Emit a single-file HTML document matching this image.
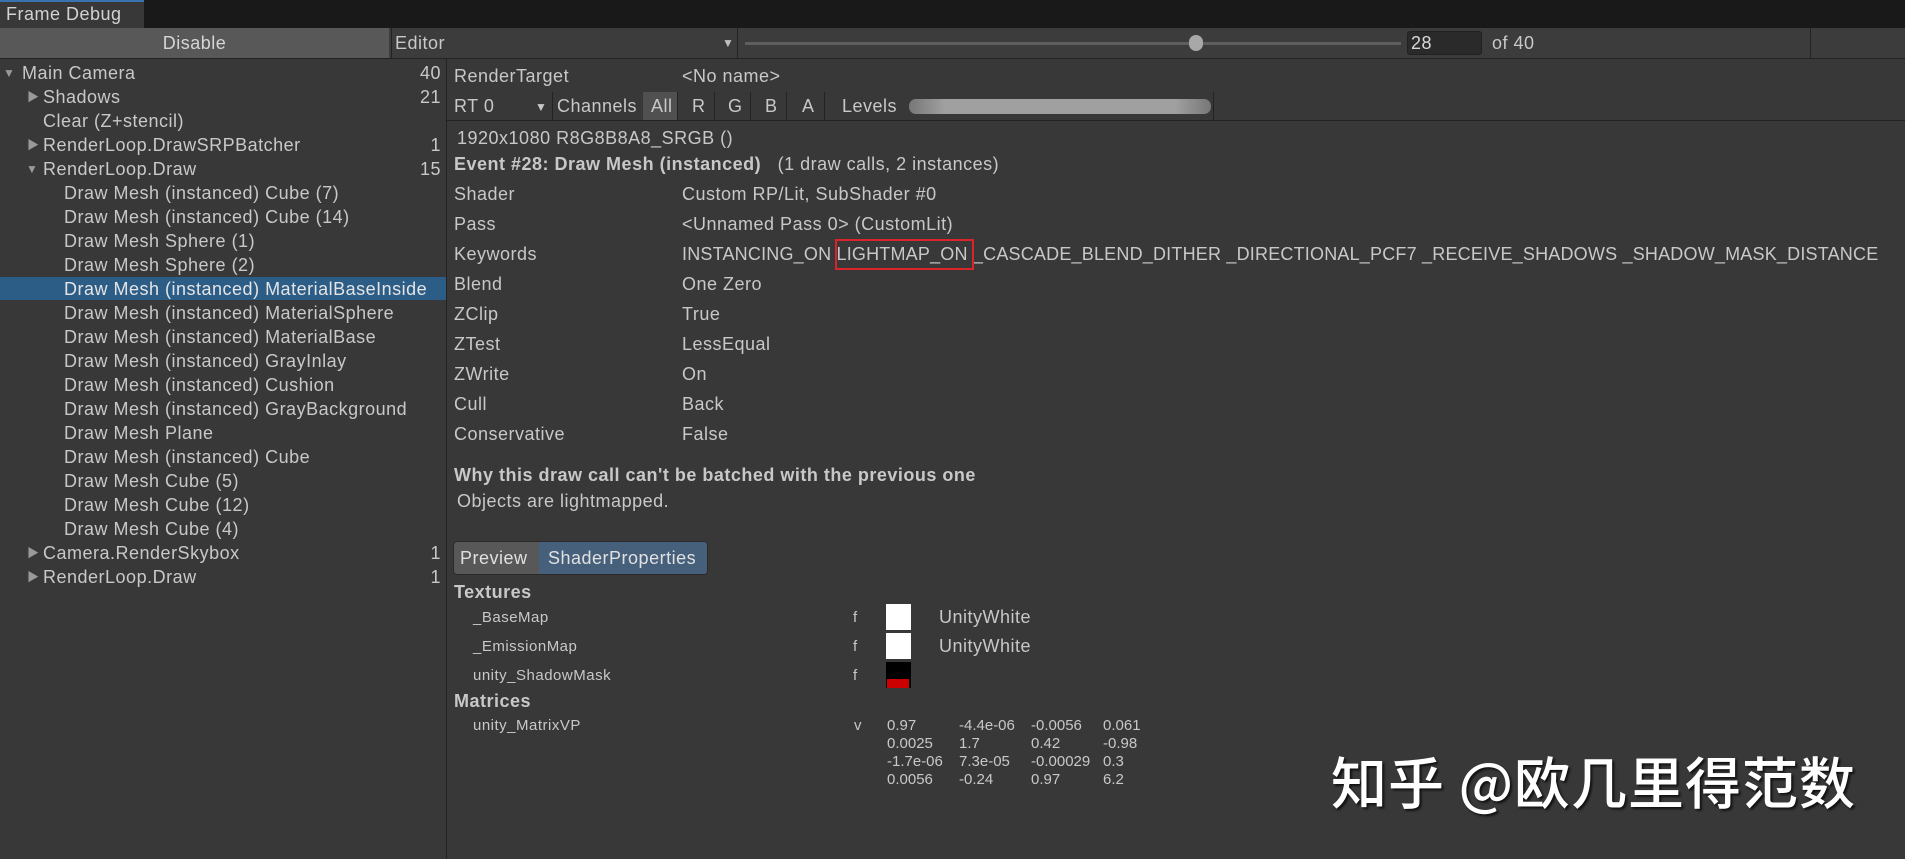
<!DOCTYPE html>
<html><head><meta charset="utf-8"><style>
*{margin:0;padding:0;box-sizing:border-box}
body{width:1905px;height:859px;background:#383838;font-family:"Liberation Sans","Noto Sans CJK SC",sans-serif;color:#c8c8c8;overflow:hidden;position:relative;font-size:18px;letter-spacing:0.5px}
.a{position:absolute;white-space:nowrap}
.t{line-height:24px}
</style></head><body>
<div class="a" style="left:0;top:0;width:1905px;height:28px;background:#191919"></div>
<div class="a" style="left:0;top:0;width:144px;height:28px;background:#383838;border-top:2px solid #3a72b0"></div>
<div class="a t" style="left:6px;top:2px;font-size:18px;color:#d2d2d2">Frame Debug</div>
<div class="a" style="left:0;top:28px;width:1905px;height:31px;background:#3c3c3c;border-bottom:1px solid #232323"></div>
<div class="a" style="left:0;top:28px;width:389px;height:30px;background:#585858"></div>
<div class="a t" style="left:0;top:31px;width:389px;text-align:center;color:#d6d6d6">Disable</div>
<div class="a" style="left:391px;top:28px;width:347px;height:30px;background:#3c3c3c;border-left:1px solid #232323;border-right:1px solid #232323"></div>
<div class="a t" style="left:395px;top:31px">Editor</div>
<div class="a" style="left:722px;top:36px;font-size:12px;color:#c0c0c0">▼</div>
<div class="a" style="left:745px;top:42px;width:656px;height:3px;background:#5e5e5e"></div>
<div class="a" style="left:1189px;top:35px;width:14px;height:16px;border-radius:7px;background:#a8a8a8"></div>
<div class="a" style="left:1407px;top:31px;width:75px;height:24px;background:#2a2a2a;border-radius:3px;border:1px solid #212121"></div>
<div class="a t" style="left:1411px;top:31px;color:#d8d8d8">28</div>
<div class="a t" style="left:1492px;top:31px">of 40</div>
<div class="a" style="left:1810px;top:28px;width:1px;height:30px;background:#232323"></div>
<div class="a" style="left:446px;top:59px;width:1px;height:800px;background:#232323"></div>
<div class="a" style="left:0;top:277px;width:446px;height:23px;background:#2c5d87"></div>
<div style="position:absolute;left:0;top:61px;width:446px">
<div class="t" style="position:relative;padding-left:22px">Main Camera<span style="position:absolute;left:3px;top:0;font-size:12px;color:#999">▼</span><span style="position:absolute;right:5px">40</span></div>
<div class="t" style="position:relative;padding-left:43px">Shadows<span style="position:absolute;left:27px;font-size:12px;color:#999">▶</span><span style="position:absolute;right:5px">21</span></div>
<div class="t" style="padding-left:43px">Clear (Z+stencil)</div>
<div class="t" style="position:relative;padding-left:43px">RenderLoop.DrawSRPBatcher<span style="position:absolute;left:27px;font-size:12px;color:#999">▶</span><span style="position:absolute;right:5px">1</span></div>
<div class="t" style="position:relative;padding-left:43px">RenderLoop.Draw<span style="position:absolute;left:26px;font-size:12px;color:#999">▼</span><span style="position:absolute;right:5px">15</span></div>
<div class="t" style="padding-left:64px">Draw Mesh (instanced) Cube (7)</div>
<div class="t" style="padding-left:64px">Draw Mesh (instanced) Cube (14)</div>
<div class="t" style="padding-left:64px">Draw Mesh Sphere (1)</div>
<div class="t" style="padding-left:64px">Draw Mesh Sphere (2)</div>
<div class="t" style="padding-left:64px;color:#e4e4e4">Draw Mesh (instanced) MaterialBaseInside</div>
<div class="t" style="padding-left:64px">Draw Mesh (instanced) MaterialSphere</div>
<div class="t" style="padding-left:64px">Draw Mesh (instanced) MaterialBase</div>
<div class="t" style="padding-left:64px">Draw Mesh (instanced) GrayInlay</div>
<div class="t" style="padding-left:64px">Draw Mesh (instanced) Cushion</div>
<div class="t" style="padding-left:64px">Draw Mesh (instanced) GrayBackground</div>
<div class="t" style="padding-left:64px">Draw Mesh Plane</div>
<div class="t" style="padding-left:64px">Draw Mesh (instanced) Cube</div>
<div class="t" style="padding-left:64px">Draw Mesh Cube (5)</div>
<div class="t" style="padding-left:64px">Draw Mesh Cube (12)</div>
<div class="t" style="padding-left:64px">Draw Mesh Cube (4)</div>
<div class="t" style="position:relative;padding-left:43px">Camera.RenderSkybox<span style="position:absolute;left:27px;font-size:12px;color:#999">▶</span><span style="position:absolute;right:5px">1</span></div>
<div class="t" style="position:relative;padding-left:43px">RenderLoop.Draw<span style="position:absolute;left:27px;font-size:12px;color:#999">▶</span><span style="position:absolute;right:5px">1</span></div>
</div>
<div class="a t" style="left:454px;top:64px">RenderTarget</div>
<div class="a t" style="left:682px;top:64px">&lt;No name&gt;</div>
<div class="a" style="left:447px;top:92px;width:1458px;height:29px;border-bottom:1px solid #232323"></div>
<div class="a t" style="left:454px;top:94px">RT 0</div>
<div class="a" style="left:535px;top:100px;font-size:12px">▼</div>
<div class="a" style="left:552px;top:92px;width:1px;height:28px;background:#232323"></div>
<div class="a t" style="left:557px;top:94px">Channels</div>
<div class="a" style="left:643px;top:92px;width:34px;height:28px;background:#505050"></div>
<div class="a t" style="left:651px;top:94px">All</div>
<div class="a t" style="left:692px;top:94px">R</div>
<div class="a t" style="left:728px;top:94px">G</div>
<div class="a t" style="left:765px;top:94px">B</div>
<div class="a t" style="left:802px;top:94px">A</div>
<div class="a" style="left:677px;top:92px;width:1px;height:28px;background:#232323"></div>
<div class="a" style="left:714px;top:92px;width:1px;height:28px;background:#232323"></div>
<div class="a" style="left:750px;top:92px;width:1px;height:28px;background:#232323"></div>
<div class="a" style="left:786px;top:92px;width:1px;height:28px;background:#232323"></div>
<div class="a" style="left:824px;top:92px;width:1px;height:28px;background:#232323"></div>
<div class="a t" style="left:842px;top:94px">Levels</div>
<div class="a" style="left:909px;top:99px;width:302px;height:15px;border-radius:7px;background:linear-gradient(90deg,#777,#a0a0a0 12%,#a0a0a0 88%,#777)"></div>
<div class="a" style="left:1213px;top:92px;width:1px;height:28px;background:#232323"></div>
<div class="a t" style="left:457px;top:126px">1920x1080 R8G8B8A8_SRGB ()</div>
<div class="a t" style="left:454px;top:152px"><b>Event #28: Draw Mesh (instanced)</b>&nbsp;&nbsp;&nbsp;(1 draw calls, 2 instances)</div>
<div class="a" style="left:454px;top:179px;line-height:30px">Shader<br>Pass<br>Keywords<br>Blend<br>ZClip<br>ZTest<br>ZWrite<br>Cull<br>Conservative</div>
<div class="a" style="left:682px;top:179px;line-height:30px">Custom RP/Lit, SubShader #0<br>&lt;Unnamed Pass 0&gt; (CustomLit)<br><span style="letter-spacing:0.2px">INSTANCING_ON LIGHTMAP_ON _CASCADE_BLEND_DITHER _DIRECTIONAL_PCF7 _RECEIVE_SHADOWS _SHADOW_MASK_DISTANCE</span><br>One Zero<br>True<br>LessEqual<br>On<br>Back<br>False</div>
<div class="a" style="left:835px;top:239px;width:139px;height:31px;border:2px solid #d8242a"></div>
<div class="a t" style="left:454px;top:463px;font-weight:bold">Why this draw call can't be batched with the previous one</div>
<div class="a t" style="left:457px;top:489px">Objects are lightmapped.</div>
<div class="a" style="left:453px;top:541px;width:255px;height:34px;border-radius:4px;background:#585858;border:1px solid #2a2a2a;overflow:hidden"><div style="position:absolute;left:85px;top:0;width:170px;height:34px;background:#46607c"></div></div>
<div class="a t" style="left:460px;top:546px;color:#e0e0e0">Preview</div>
<div class="a t" style="left:548px;top:546px;color:#e0e0e0">ShaderProperties</div>
<div class="a t" style="left:454px;top:580px;font-weight:bold">Textures</div>
<div class="a" style="left:473px;top:603px;font-size:15px;line-height:29px">_BaseMap<br>_EmissionMap<br>unity_ShadowMask</div>
<div class="a" style="left:853px;top:603px;font-size:15px;line-height:29px">f<br>f<br>f</div>
<div class="a" style="left:886px;top:604px;width:25px;height:26px;background:#fff"></div>
<div class="a" style="left:886px;top:633px;width:25px;height:26px;background:#fff"></div>
<div class="a" style="left:886px;top:662px;width:25px;height:26px;background:#000"></div>
<div class="a" style="left:887px;top:679px;width:22px;height:9px;background:#c00"></div>
<div class="a" style="left:939px;top:603px;line-height:29px">UnityWhite<br>UnityWhite</div>
<div class="a t" style="left:454px;top:689px;font-weight:bold">Matrices</div>
<div class="a" style="left:473px;top:716px;font-size:15px;line-height:20px">unity_MatrixVP</div>
<div class="a" style="left:854px;top:716px;font-size:15px;line-height:20px">v</div>
<div class="a" style="left:887px;top:717px;font-size:15px;line-height:18px;letter-spacing:0">0.97<br>0.0025<br>-1.7e-06<br>0.0056</div>
<div class="a" style="left:959px;top:717px;font-size:15px;line-height:18px;letter-spacing:0">-4.4e-06<br>1.7<br>7.3e-05<br>-0.24</div>
<div class="a" style="left:1031px;top:717px;font-size:15px;line-height:18px;letter-spacing:0">-0.0056<br>0.42<br>-0.00029<br>0.97</div>
<div class="a" style="left:1103px;top:717px;font-size:15px;line-height:18px;letter-spacing:0">0.061<br>-0.98<br>0.3<br>6.2</div>
<div class="a" style="left:1331px;top:746px;font-family:'Noto Sans CJK SC',sans-serif;font-size:56px;line-height:70px;color:#fff;font-weight:500;letter-spacing:1px;text-shadow:2px 2px 2px #111">知乎 @欧几里得范数</div>
</body></html>
